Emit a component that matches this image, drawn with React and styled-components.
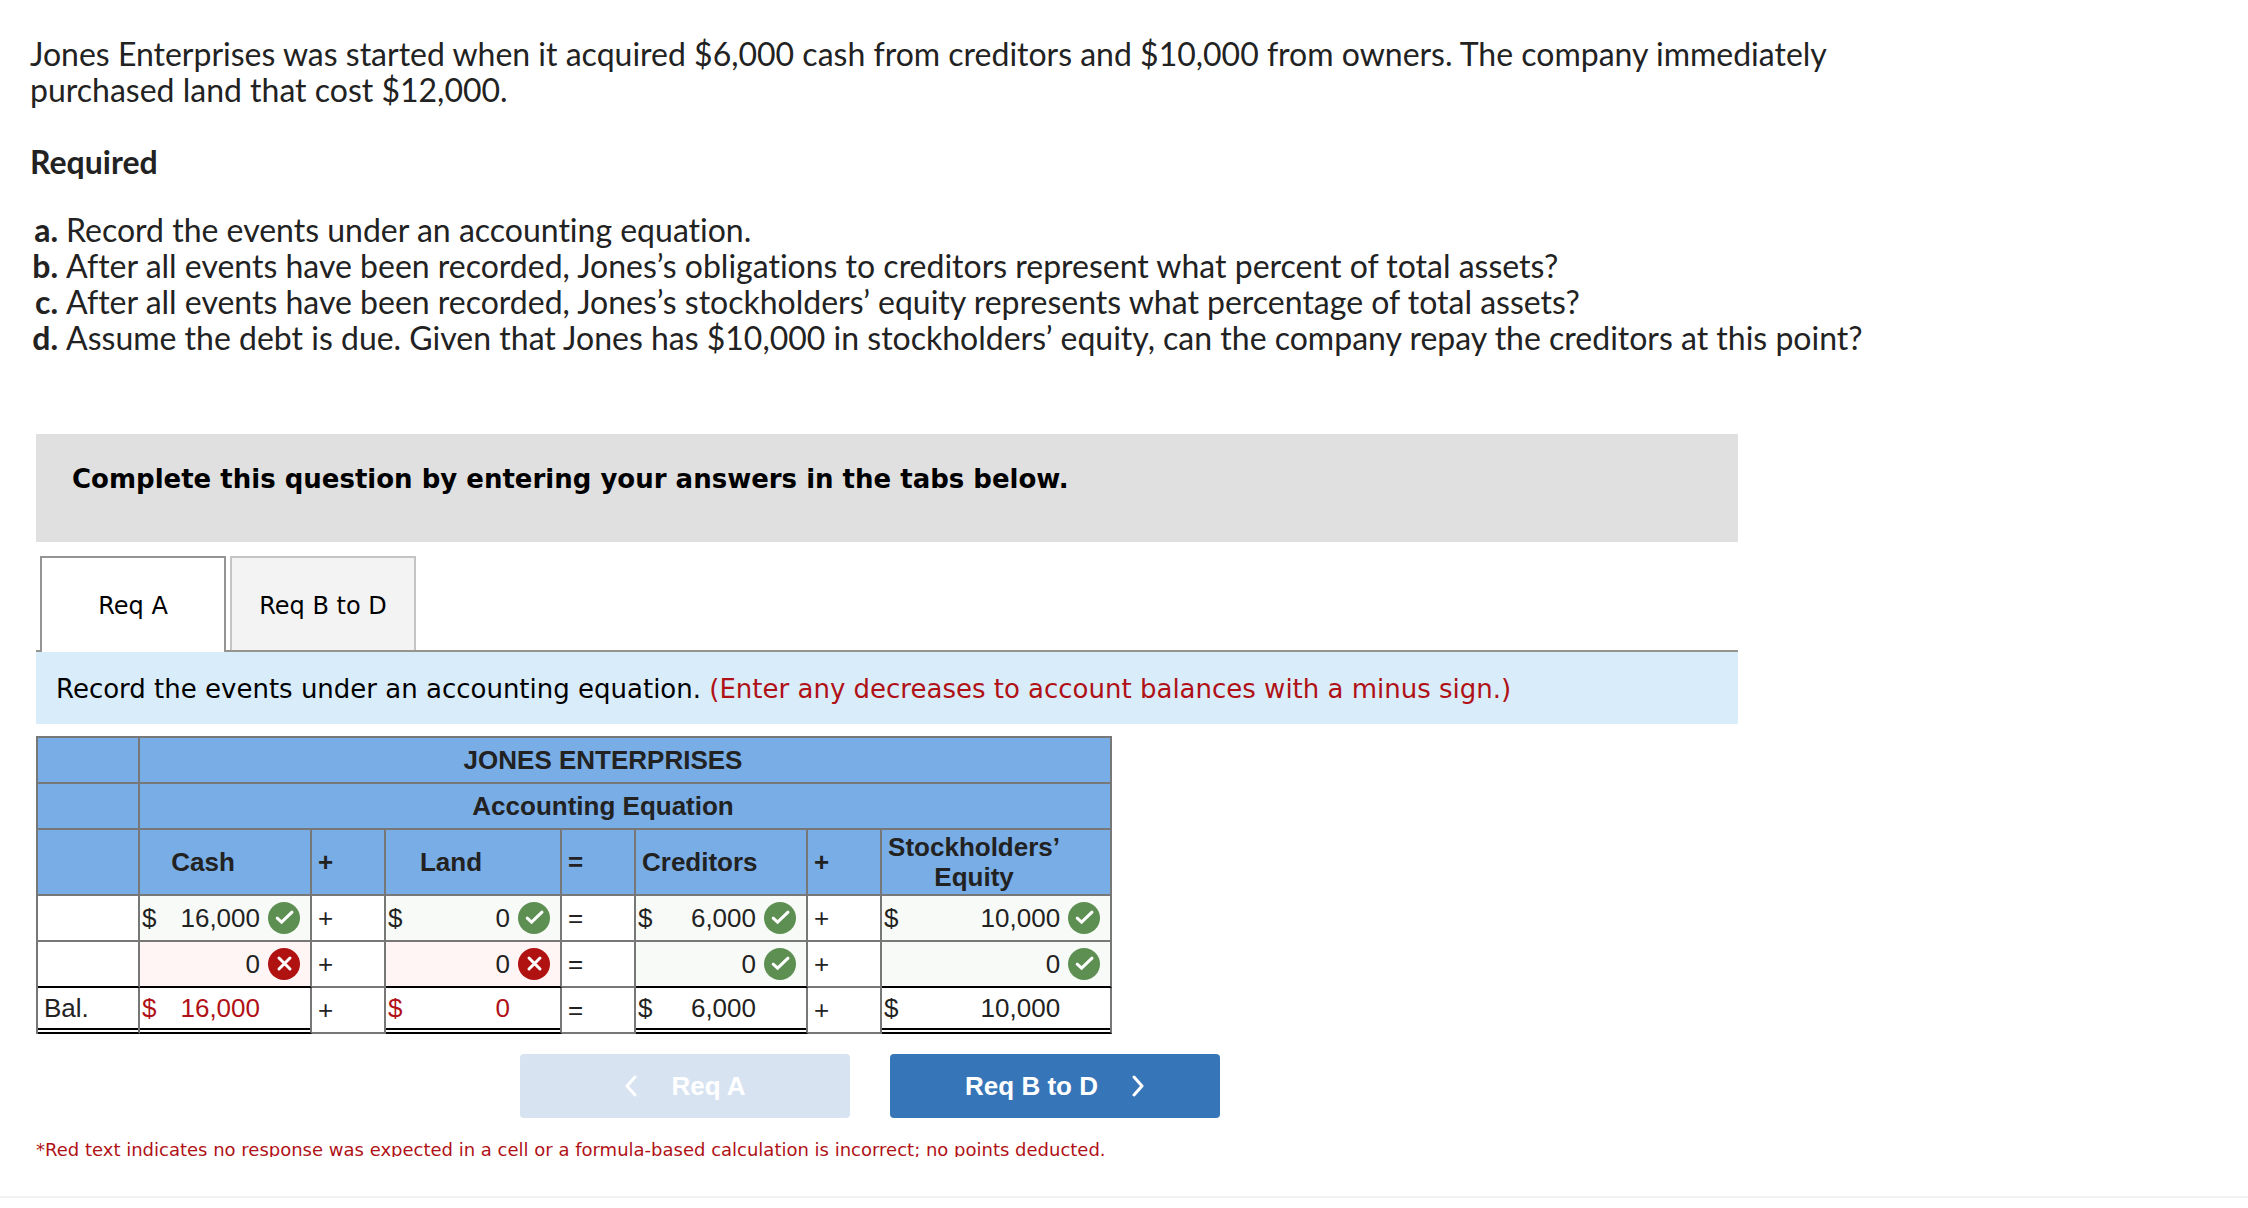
import { useState } from "react";
import styled, { createGlobalStyle } from "styled-components";

const GlobalStyle = createGlobalStyle`
  * {
    box-sizing: border-box;
  }
  body {
    margin: 0;
    background-color: #fff;
    color: #222;
  }
`;

const sans = `"Liberation Sans", Arial, sans-serif`;
const verdana = `Verdana, "DejaVu Sans", sans-serif`;

const Page = styled.main`
  padding-top: 36px;
  border-bottom: 2px solid #f1f1f1;
`;

const Prompt = styled.section`
  max-width: 1920px;
  padding: 0 0 0 30px;
  font-family: Lato, sans-serif;
  font-size: 32px;
  font-variant-ligatures: none;
  line-height: 36px;
`;
const Intro = styled.p`
  margin: 0;
`;
const Heading = styled.h2`
  margin: 36px 0 32px;
  font-size: inherit;
  line-height: inherit;
`;
const Requirements = styled.ul`
  margin: 0;
  padding: 0;
  list-style: none;
`;
const Requirement = styled.li`
  display: flex;
  gap: 8px;
`;
const Letter = styled.strong`
  width: 28px;
  text-align: right;
`;

const Worksheet = styled.section`
  max-width: 1738px;
  margin-top: 78px;
  padding-left: 36px;
`;
const Banner = styled.div`
  padding: 29px 36px 47px;
  background-color: #e0e0e0;
  color: #000;
  font-family: ${verdana};
  font-size: 26px;
  font-weight: bold;
  line-height: 32px;
`;

const TabBar = styled.div`
  display: flex;
  gap: 4px;
  margin-top: 14px;
  padding-left: 4px;
  border-bottom: 2px solid #94958f;
`;
const Tab = styled.button`
  width: 186px;
  height: ${({ $active }) => ($active ? "96px" : "94px")};
  margin-bottom: ${({ $active }) => ($active ? "-2px" : "0")};
  padding: ${({ $active }) => ($active ? "2px" : "4px")} 0 0;
  border: 2px solid ${({ $active }) => ($active ? "#949494" : "#c4c4c4")};
  border-bottom: 0;
  background-color: ${({ $active }) => ($active ? "#fff" : "#f3f3f3")};
  color: #000;
  font-family: ${verdana};
  font-size: 24px;
`;

const Instruction = styled.p`
  margin: 0;
  padding: 21px 20px 19px;
  background-color: #d9ecf9;
  color: #000;
  font-family: ${verdana};
  font-size: 26px;
  line-height: 32px;
`;
const Hint = styled.span`
  color: #b01116;
`;

const Table = styled.table`
  width: 1076px;
  margin-top: 12px;
  border: 2px solid #777;
  border-width: 2px 0 0 2px;
  border-spacing: 0;
  table-layout: fixed;
  font-family: ${sans};
  font-size: 26px;
  line-height: 30px;
`;
const Col = styled.col`
  width: ${({ $width }) => $width}px;
`;
const Row = styled.tr`
  height: ${({ $tall }) => ($tall ? "66px" : "46px")};
`;
const HeadCell = styled.th`
  padding: 0 ${({ $operator }) => ($operator ? "6px" : "50px")} 0 6px;
  border: 2px solid #777;
  border-width: 0 2px 2px 0;
  background-color: #79ade6;
  text-align: ${({ $operator }) => ($operator ? "left" : "center")};
`;

const marks = { right: "#f8faf7", wrong: "#fff5f4" };

const Cell = styled.td`
  padding: 0 6px;
  border: 2px solid #777;
  border-width: 0 2px 2px 0;
`;
const AmountCell = styled(Cell)`
  padding: 0 10px 0 2px;
  border-bottom-color: ${({ $last }) => ($last ? "#000" : "#777")};
  background-color: ${({ $mark }) => marks[$mark]};
`;
const totalRule = `
  border-bottom-color: #000;
  box-shadow: inset 0 -2px #fff, inset 0 -4px #000;
`;
const BalanceLabel = styled(Cell)`
  padding: 0 6px 4px;
  ${totalRule}
`;
const BalanceCell = styled(Cell)`
  padding: 0 50px 4px 2px;
  color: ${({ $unexpected }) => ($unexpected ? "#b01116" : "inherit")};
  ${totalRule}
`;
const LabelCell = styled(Cell)`
  border-bottom-color: ${({ $last }) => ($last ? "#000" : "#777")};
`;
const Amount = styled.div`
  display: flex;
  align-items: center;
`;
const Figure = styled.span`
  margin-left: auto;
`;
const Badge = styled.svg`
  flex: none;
  width: 32px;
  height: 32px;
  margin-left: 8px;
`;

const Pager = styled.nav`
  display: flex;
  justify-content: center;
  gap: 40px;
  margin-top: 20px;
  padding-right: 34px;
`;
const PagerButton = styled.button`
  display: flex;
  justify-content: center;
  align-items: center;
  gap: 33px;
  width: 330px;
  height: 64px;
  border: 0;
  border-radius: 4px;
  background-color: #3775b9;
  color: #fff;
  font-family: ${sans};
  font-size: 26px;
  font-weight: bold;

  &:disabled {
    background-color: #d7e3f1;
  }
`;
const Chevron = styled.svg`
  width: 14px;
  height: 22px;
`;

/* the box ends just below the baseline, so descenders are cut */
const Footnote = styled.p`
  height: 20px;
  margin: 19px 0 39px;
  overflow: hidden;
  color: #b01116;
  font-family: ${verdana};
  font-size: 18px;
  line-height: 26px;
`;

const requirements = [
  ["a.", "Record the events under an accounting equation."],
  [
    "b.",
    "After all events have been recorded, Jones’s obligations to creditors represent what percent of total assets?",
  ],
  [
    "c.",
    "After all events have been recorded, Jones’s stockholders’ equity represents what percentage of total assets?",
  ],
  [
    "d.",
    "Assume the debt is due. Given that Jones has $10,000 in stockholders’ equity, can the company repay the creditors at this point?",
  ],
];

const widths = [102, 172, 74, 176, 74, 172, 74, 230];
const columns = ["Cash", "+", "Land", "=", "Creditors", "+", "Stockholders’ Equity"];

const events = [
  [
    { value: "16,000", mark: "right" },
    "+",
    { value: "0", mark: "right" },
    "=",
    { value: "6,000", mark: "right" },
    "+",
    { value: "10,000", mark: "right" },
  ],
  [
    { value: "0", mark: "wrong" },
    "+",
    { value: "0", mark: "wrong" },
    "=",
    { value: "0", mark: "right" },
    "+",
    { value: "0", mark: "right" },
  ],
];

const balance = [
  { value: "16,000", unexpected: true },
  "+",
  { value: "0", unexpected: true },
  "=",
  { value: "6,000" },
  "+",
  { value: "10,000" },
];

const MarkBadge = ({ mark }) => (
  <Badge viewBox="0 0 32 32" role="img" aria-label={mark}>
    <circle cx="16" cy="16" r="16" fill={mark === "right" ? "#5d8f53" : "#b01111"} />
    <path
      d={mark === "right" ? "M9.2 16.2L13.6 20.2L24 10.2" : "M11 10L22 21M22 10L11 21"}
      fill="none"
      stroke="#fff"
      strokeWidth="3"
      strokeLinecap="round"
    />
  </Badge>
);

const Arrow = ({ d }) => (
  <Chevron viewBox="0 0 14 22" aria-hidden="true">
    <path d={d} fill="none" stroke="currentColor" strokeWidth="3" strokeLinecap="round" strokeLinejoin="round" />
  </Chevron>
);

const EquationTable = () => (
  <Table>
    <colgroup>
      {widths.map((width, i) => (
        <Col key={i} $width={width} />
      ))}
    </colgroup>
    <thead>
      <Row>
        <HeadCell />
        <HeadCell colSpan={7}>JONES ENTERPRISES</HeadCell>
      </Row>
      <Row>
        <HeadCell />
        <HeadCell colSpan={7}>Accounting Equation</HeadCell>
      </Row>
      <Row $tall>
        <HeadCell />
        {columns.map((name, i) => (
          <HeadCell key={i} $operator={name.length === 1}>
            {name}
          </HeadCell>
        ))}
      </Row>
    </thead>
    <tbody>
      {events.map((cells, row) => {
        const last = row === events.length - 1;
        return (
          <Row key={row}>
            <LabelCell $last={last} />
            {cells.map((cell, i) =>
              typeof cell === "string" ? (
                <Cell key={i}>{cell}</Cell>
              ) : (
                <AmountCell key={i} $mark={cell.mark} $last={last}>
                  <Amount>
                    {row === 0 && <span>$</span>}
                    <Figure>{cell.value}</Figure>
                    <MarkBadge mark={cell.mark} />
                  </Amount>
                </AmountCell>
              )
            )}
          </Row>
        );
      })}
      <Row>
        <BalanceLabel>Bal.</BalanceLabel>
        {balance.map((cell, i) =>
          typeof cell === "string" ? (
            <Cell key={i}>{cell}</Cell>
          ) : (
            <BalanceCell key={i} $unexpected={cell.unexpected}>
              <Amount>
                <span>$</span>
                <Figure>{cell.value}</Figure>
              </Amount>
            </BalanceCell>
          )
        )}
      </Row>
    </tbody>
  </Table>
);

const App = () => {
  const [tab, setTab] = useState("a");

  return (
    <Page>
      <GlobalStyle />
      <Prompt>
        <Intro>
          Jones Enterprises was started when it acquired $6,000 cash from creditors and $10,000 from owners. The
          company immediately purchased land that cost $12,000.
        </Intro>
        <Heading>Required</Heading>
        <Requirements>
          {requirements.map(([letter, text]) => (
            <Requirement key={letter}>
              <Letter>{letter}</Letter>
              <span>{text}</span>
            </Requirement>
          ))}
        </Requirements>
      </Prompt>
      <Worksheet>
        <Banner>Complete this question by entering your answers in the tabs below.</Banner>
        <TabBar role="tablist">
          <Tab role="tab" aria-selected={tab === "a"} $active={tab === "a"} onClick={() => setTab("a")}>
            Req A
          </Tab>
          <Tab role="tab" aria-selected={tab === "b"} $active={tab === "b"} onClick={() => setTab("b")}>
            Req B to D
          </Tab>
        </TabBar>
        <Instruction>
          Record the events under an accounting equation.{" "}
          <Hint>(Enter any decreases to account balances with a minus sign.)</Hint>
        </Instruction>
        <EquationTable />
        <Pager>
          <PagerButton disabled={tab === "a"} onClick={() => setTab("a")}>
            <Arrow d="M11 2L3 11L11 20" />
            Req A
          </PagerButton>
          <PagerButton disabled={tab === "b"} onClick={() => setTab("b")}>
            Req B to D
            <Arrow d="M3 2L11 11L3 20" />
          </PagerButton>
        </Pager>
        <Footnote>
          *Red text indicates no response was expected in a cell or a formula-based calculation is incorrect; no points
          deducted.
        </Footnote>
      </Worksheet>
    </Page>
  );
};

export default App;
